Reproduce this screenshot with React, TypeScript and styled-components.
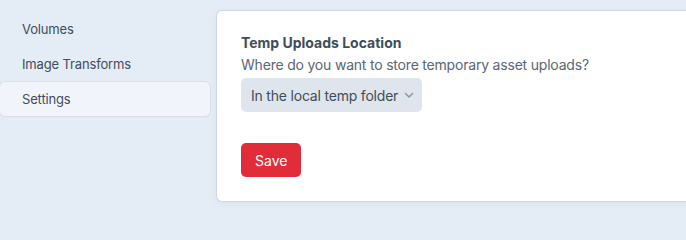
import styled, { createGlobalStyle } from "styled-components";

const GlobalStyle = createGlobalStyle`
  html, body {
    margin: 0;
    padding: 0;
    background: #e4ecf6;
  }
  body {
    font-family: Inter, "Noto Sans", sans-serif;
    font-size: 14px;
    color: #3f4d5a;
    -webkit-font-smoothing: antialiased;
  }
`;

const Layout = styled.div`
  display: flex;
  align-items: flex-start;
  width: 686px;
  height: 217px;
  overflow: hidden;
  padding-top: 11px;
  box-sizing: border-box;
`;

const Sidebar = styled.nav`
  width: 210px;
  flex-shrink: 0;
  margin-right: 7px;
  padding-top: 1px;
`;

const NavList = styled.ul`
  list-style: none;
  margin: 0;
  padding: 0;
  display: flex;
  flex-direction: column;
  gap: 1px;
`;

const NavItem = styled.li<{ $active?: boolean }>`
  height: 34px;
  display: flex;
  align-items: center;
  padding-left: 22px;
  font-size: 13px;
  letter-spacing: -0.15px;
  color: #3f4d5a;
  border-radius: 5px;
  background: ${(p) => (p.$active ? "#f1f5fb" : "transparent")};
  box-shadow: ${(p) =>
    p.$active ? "0 0 0 1px #d7dfe9, 0 1px 2px rgba(31,41,51,0.06)" : "none"};
`;

const Card = styled.main`
  flex: 1;
  min-width: 500px;
  height: 190px;
  background: #fff;
  border-radius: 5px;
  box-shadow: 0 0 0 1px #cdd8e4, 0 2px 8px rgba(31, 41, 51, 0.06);
  padding: 22px 24px;
  box-sizing: border-box;
`;

const Field = styled.div`
  display: flex;
  flex-direction: column;
  align-items: flex-start;
`;

const Label = styled.label`
  font-weight: 700;
  font-size: 14px;
  color: #3f4d5a;
  line-height: 20px;
`;

const Instructions = styled.p`
  margin: 2px 0 3px;
  font-size: 14px;
  letter-spacing: -0.2px;
  color: #596673;
  line-height: 20px;
`;

const SelectBox = styled.div`
  height: 34px;
  display: flex;
  align-items: center;
  gap: 6px;
  padding: 0 8px 0 10px;
  background: #dfe5ec;
  border-radius: 5px;
  color: #3f4d5a;
  font-size: 14px;
  letter-spacing: -0.2px;
`;

const SaveButton = styled.button`
  margin-top: 31px;
  height: 34px;
  padding: 0 14px;
  border: none;
  border-radius: 5px;
  background: #e12d39;
  color: #fff;
  font-family: inherit;
  font-size: 14px;
`;

const Chevron = () => (
  <svg width="10" height="10" viewBox="0 0 10 10" fill="none">
    <path d="M1.5 3.5 5 7l3.5-3.5" stroke="#8a96a3" strokeWidth="1.5" strokeLinecap="round" strokeLinejoin="round" />
  </svg>
);

export default function App() {
  return (
    <>
      <GlobalStyle />
      <Layout>
        <Sidebar>
          <NavList>
            <NavItem>Volumes</NavItem>
            <NavItem>Image Transforms</NavItem>
            <NavItem $active>Settings</NavItem>
          </NavList>
        </Sidebar>
        <Card>
          <Field>
            <Label>Temp Uploads Location</Label>
            <Instructions>Where do you want to store temporary asset uploads?</Instructions>
            <SelectBox>
              In the local temp folder
              <Chevron />
            </SelectBox>
            <SaveButton>Save</SaveButton>
          </Field>
        </Card>
      </Layout>
    </>
  );
}
